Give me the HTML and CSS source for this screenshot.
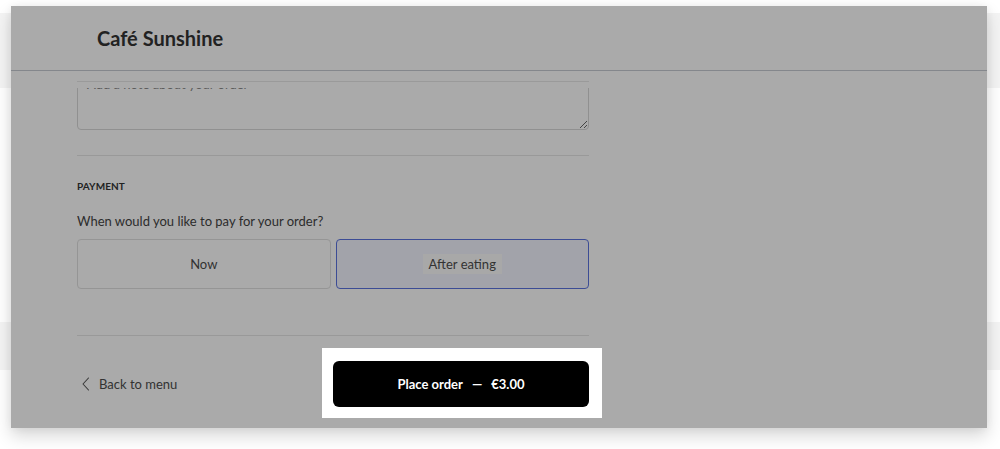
FILE: index.html
```html
<!DOCTYPE html>
<html lang="en">
<head>
<meta charset="utf-8">
<title>Café Sunshine – Checkout</title>
<link rel="stylesheet" href="styles.css">
</head>
<body>
  <div class="card">
    <header class="topbar">
      <h1 class="brand">Café Sunshine</h1>
    </header>
    <main class="scroll">
      <div class="col">
        <div class="top-rule"></div>
        <div class="note-clip">
          <textarea class="note" placeholder="Add a note about your order"></textarea>
        </div>
        <div class="divider"></div>
        <div class="section-label">PAYMENT</div>
        <p class="question">When would you like to pay for your order?</p>
        <div class="options">
          <button class="option">Now</button>
          <button class="option selected"><span class="option-text">After eating</span></button>
        </div>
      </div>
    </main>
    <footer class="footer">
      <div class="col footer-row">
        <a class="back" href="#">
          <svg class="chev" width="8" height="14" viewBox="0 0 8 14"><polyline points="6.5,1 1,7 6.5,13" fill="none" stroke="#555" stroke-width="1.1" stroke-linecap="round" stroke-linejoin="round"/></svg>
          <span>Back to menu</span>
        </a>
        <button class="place">
          <span>Place order</span><span class="dash">—</span><span>€3.00</span>
        </button>
      </div>
    </footer>
  </div>
</body>
</html>
```
FILE: styles.css
```css
* { box-sizing: border-box; }
html, body { margin: 0; padding: 0; }
body {
  width: 1000px;
  height: 449px;
  overflow: hidden;
  font-family: Lato, "Noto Sans", "Liberation Sans", sans-serif;
  background: linear-gradient(to bottom,
    #ffffff 0, #ffffff 13px,
    #f4f4f4 13px, #f4f4f4 88px,
    #ffffff 88px, #ffffff 322px,
    #f4f4f4 322px, #f4f4f4 370px,
    #ffffff 370px);
}
.card {
  position: relative;
  margin: 6px 0 0 11px;
  width: 976px;
  height: 422px;
  background: #ffffff;
  overflow: hidden;
  display: flex;
  flex-direction: column;
  box-shadow: 0 8px 16px rgba(0,0,0,0.16), 0 0 8px rgba(0,0,0,0.06);
}
.topbar {
  height: 65px;
  flex: none;
  border-bottom: 1px solid #c6cbd3;
  display: flex;
  align-items: center;
  padding-left: 86px;
}
.brand {
  margin: 0;
  font-size: 20px;
  font-weight: 700;
  color: #333;
  line-height: 24px;
  padding-bottom: 1px;
}
.scroll {
  flex: 1;
  overflow: hidden;
  padding-left: 66px;
}
.col { width: 512px; }
.top-rule {
  margin-top: 10px;
  height: 1px;
  background: #e8e8e8;
}
.note-clip {
  margin-top: 6px;
  height: 42px;
  overflow: hidden;
}
.note {
  display: block;
  margin-top: -23px;
  width: 512px;
  height: 65px;
  border: 1px solid #d8d8d8;
  border-radius: 4px;
  padding: 8px 9px;
  font-family: Lato, "Noto Sans", sans-serif;
  font-size: 13px;
  line-height: 20px;
  color: #333;
  background: #fff;
  resize: vertical;
}
.note::placeholder { color: #8a8a8a; }
.divider {
  margin-top: 25px;
  height: 1px;
  background: #e6e6e6;
}
.section-label {
  margin-top: 24px;
  font-size: 10px;
  line-height: 12px;
  font-weight: 700;
  color: #333;
  letter-spacing: 0.1px;
}
.question {
  margin: 21px 0 0;
  font-size: 13px;
  line-height: 16px;
  color: #444;
}
.options {
  margin-top: 10px;
  display: grid;
  grid-template-columns: 1fr 1fr;
  gap: 5px;
}
.option {
  height: 50px;
  border: 1px solid #e0e0e0;
  border-radius: 4px;
  background: #fff;
  font-family: Lato, "Noto Sans", sans-serif;
  font-size: 13px;
  color: #4d4d4d;
  padding: 0;
}
.option.selected {
  border-color: #5a73e0;
  background: #f3f5ff;
}
.option-text {
  display: inline-block;
  background: #fdfdfd;
  padding: 2px 6px;
  line-height: 16px;
}
.footer {
  flex: none;
  height: 93px;
  padding-left: 66px;
}
.footer-row {
  border-top: 1px solid #e6e6e6;
  padding-top: 25px;
  display: grid;
  grid-template-columns: 1fr 1fr;
  align-items: center;
}
.back {
  display: flex;
  align-items: center;
  gap: 9px;
  padding-left: 5px;
  color: #4d4d4d;
  text-decoration: none;
  font-size: 13px;
}
.chev { display: block; }
.place {
  position: relative;
  height: 46px;
  border: none;
  border-radius: 6px;
  background: #000;
  color: #fff;
  font-family: Lato, "Noto Sans", sans-serif;
  font-size: 13px;
  font-weight: 700;
  display: flex;
  align-items: center;
  justify-content: center;
}
.place .dash { margin: 0 9px; }
.place::after {
  content: "";
  position: absolute;
  top: -13px;
  bottom: -11px;
  left: -11px;
  right: -13px;
  box-shadow: 0 0 0 1400px rgba(0,0,0,0.333);
  pointer-events: none;
  z-index: 10;
}
```
